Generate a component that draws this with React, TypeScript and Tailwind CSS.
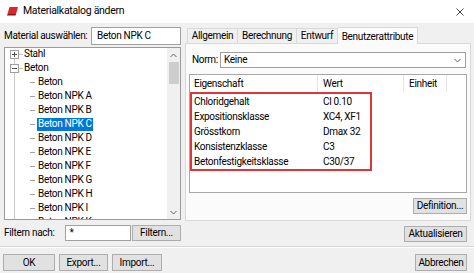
import React from "react";

const Chevron = ({ up = false, cls = "" }: { up?: boolean; cls?: string }) => (
  <svg width="7" height="5" viewBox="0 0 7 5" className={cls}>
    <polyline
      points={up ? "0.5,4 3.5,1 6.5,4" : "0.5,1 3.5,4 6.5,1"}
      fill="none"
      stroke="#606060"
      strokeWidth="1"
    />
  </svg>
);

const Btn = ({ w, h = 17, children }: { w: string; h?: number; children: React.ReactNode }) => (
  <div
    className={`${w} ${h === 16 ? "h-[16px]" : "h-[17px]"} bg-[#e1e1e1] border border-[#adadad] flex items-center justify-center shrink-0`}
  >
    {children}
  </div>
);

const PlusBox = ({ minus = false }: { minus?: boolean }) => (
  <div className="w-[9px] h-[9px] border border-[#a0a0a0] bg-white flex items-center justify-center relative z-10">
    <div className="w-[5px] h-px bg-[#505050]" />
    {!minus && <div className="absolute w-px h-[5px] bg-[#505050]" />}
  </div>
);

const children = [
  "Beton",
  "Beton NPK A",
  "Beton NPK B",
  "Beton NPK C",
  "Beton NPK D",
  "Beton NPK E",
  "Beton NPK F",
  "Beton NPK G",
  "Beton NPK H",
  "Beton NPK I",
  "Beton NPK K",
];

const props: [string, string][] = [
  ["Chloridgehalt", "Cl 0.10"],
  ["Expositionsklasse", "XC4, XF1"],
  ["Grösstkorn", "Dmax 32"],
  ["Konsistenzklasse", "C3"],
  ["Betonfestigkeitsklasse", "C30/37"],
];

export default function App() {
  return (
    <div className="w-[474px] h-[273px] bg-[#f0f0f0] font-[Roboto,sans-serif] text-[10px] tracking-[-0.3px] text-black leading-none overflow-hidden flex flex-col">
      {/* Title bar */}
      <div className="h-[23px] bg-white flex items-center pl-[7px] pr-[10px] shrink-0">
        <svg width="11" height="9" viewBox="0 0 11 9">
          <polygon points="2.5,0 11,0 9,7 0.5,7" fill="#d8262b" />
          <polygon points="0.5,7 9,7 8.6,8.5 0,8.5" fill="#8e1218" />
        </svg>
        <span className="ml-[5px] text-[10.5px]">Materialkatalog ändern</span>
        <svg className="ml-auto" width="8" height="8" viewBox="0 0 8 8">
          <line x1="0.5" y1="0.5" x2="7.5" y2="7.5" stroke="#333" strokeWidth="0.9" />
          <line x1="7.5" y1="0.5" x2="0.5" y2="7.5" stroke="#333" strokeWidth="0.9" />
        </svg>
      </div>

      {/* Main area */}
      <div className="flex pl-[4px] gap-[4px] shrink-0">
        {/* Left column */}
        <div className="w-[177px] flex flex-col pt-[4px]">
          <div className="h-[18px] flex items-center">
            <span>Material auswählen:</span>
            <div className="ml-auto w-[90px] h-[18px] bg-white border border-[#a0a0a0] flex items-center pl-[5px]">
              Beton NPK C
            </div>
          </div>
          <div className="mt-[2px] h-[173px] border border-[#9a9a9a] bg-white flex">
            <div className="relative flex-1 overflow-hidden">
              <div className="absolute left-[9px] top-[6px] bottom-0 w-px bg-[#c8c8c8]" />
              <div className="-mt-px">
                <div className="h-[14px] flex items-center relative">
                  <div className="ml-[5px]">
                    <PlusBox />
                  </div>
                  <div className="w-[4px] h-px bg-[#c0c0c0]" />
                  <span className="ml-[1px]">Stahl</span>
                </div>
                <div className="h-[14px] flex items-center relative">
                  <div className="ml-[5px]">
                    <PlusBox minus />
                  </div>
                  <div className="w-[4px] h-px bg-[#c0c0c0]" />
                  <span className="ml-[1px]">Beton</span>
                </div>
                {children.map((c) => {
                  const sel = c === "Beton NPK C";
                  return (
                    <div key={c} className="h-[14px] flex items-center">
                      <div className="ml-[25px] w-[5px] h-px bg-[#a0a0a0]" />
                      <span
                        className={`ml-[2px] h-[13px] px-[1px] flex items-center ${
                          sel ? "bg-[#0078d7] text-white" : ""
                        }`}
                      >
                        {c}
                      </span>
                    </div>
                  );
                })}
              </div>
            </div>
            <div className="w-[13px] bg-[#f0f0f0] flex flex-col items-center">
              <div className="h-[14px] flex items-center justify-center">
                <Chevron up />
              </div>
              <div className="w-[10px] h-[22px] bg-[#cdcdcd]" />
              <div className="flex-1" />
              <div className="h-[14px] flex items-center justify-center">
                <Chevron />
              </div>
            </div>
          </div>
          <div className="mt-[4px] h-[18px] flex items-center">
            <span>Filtern nach:</span>
            <div className="ml-[10px] w-[66px] h-[16px] bg-white border border-[#a0a0a0] flex items-center pl-[4px]">
              *
            </div>
            <div className="ml-auto">
              <Btn w="w-[49px]" h={16}>
                Filtern...
              </Btn>
            </div>
          </div>
        </div>

        {/* Right column */}
        <div className="w-[286px] flex flex-col pt-[3px]">
          <div className="h-[17px] flex items-end pl-[2px]">
            <div className="w-[51px] h-[15px] bg-[#f0f0f0] border border-b-0 border-[#d9d9d9] flex items-center justify-center">
              Allgemein
            </div>
            <div className="w-[59px] h-[15px] bg-[#f0f0f0] border border-b-0 border-l-0 border-[#d9d9d9] flex items-center justify-center">
              Berechnung
            </div>
            <div className="w-[41px] h-[15px] bg-[#f0f0f0] border border-b-0 border-l-0 border-[#d9d9d9] flex items-center justify-center">
              Entwurf
            </div>
            <div className="w-[80px] h-[17px] bg-[#fbfbfb] border border-b-0 border-l-0 border-[#d9d9d9] flex items-center justify-center pt-[1px] relative top-px">
              Benutzerattribute
            </div>
          </div>
          <div className="h-[178px] border border-[#d9d9d9] bg-[#fbfbfb] flex flex-col pl-[3px] pr-[3px] pt-[8px]">
            <div className="h-[16px] flex items-center">
              <span className="ml-[3px]">Norm:</span>
              <div className="ml-auto mr-px w-[246px] h-[16px] bg-white border border-[#a0a0a0] flex items-center pl-[3px] pr-[4px]">
                <span>Keine</span>
                <Chevron cls="ml-auto" />
              </div>
            </div>
            <div className="mt-[6px] h-[119px] border border-[#a8a8a8] bg-white flex flex-col">
              <div className="h-[17px] flex items-center shrink-0">
                <div className="w-[128px] h-full border-r border-[#e5e5e5] flex items-center pl-[4px]">
                  Eigenschaft
                </div>
                <div className="w-[86px] h-full border-r border-[#e5e5e5] flex items-center pl-[5px]">
                  Wert
                </div>
                <div className="w-[43px] h-full border-r border-[#e5e5e5] flex items-center pl-[5px]">
                  Einheit
                </div>
              </div>
              <div className="w-[182px] border-2 border-[#e0353b] flex flex-col">
                {props.map(([k, v]) => (
                  <div key={k} className="h-[15px] flex items-center">
                    <div className="w-[126px] pl-[2px]">{k}</div>
                    <div className="pl-[5px]">{v}</div>
                  </div>
                ))}
              </div>
            </div>
            <div className="mt-[5px] flex justify-end">
              <Btn w="w-[54px]" h={16}>
                Definition...
              </Btn>
            </div>
          </div>
          <div className="mt-[5px] flex justify-end pr-[4px]">
            <Btn w="w-[63px]" h={16}>
              Aktualisieren
            </Btn>
          </div>
        </div>
      </div>

      {/* Separator */}
      <div className="mt-[4px] h-px bg-[#d5d5d5] shrink-0" />
      <div className="h-px bg-white shrink-0" />

      {/* Bottom buttons */}
      <div className="mt-[6px] flex items-center pl-[3px] pr-[7px] gap-[4px]">
        <Btn w="w-[52px]">OK</Btn>
        <Btn w="w-[49px]">Export...</Btn>
        <Btn w="w-[50px]">Import...</Btn>
        <div className="ml-auto">
          <Btn w="w-[52px]">Abbrechen</Btn>
        </div>
      </div>
    </div>
  );
}
